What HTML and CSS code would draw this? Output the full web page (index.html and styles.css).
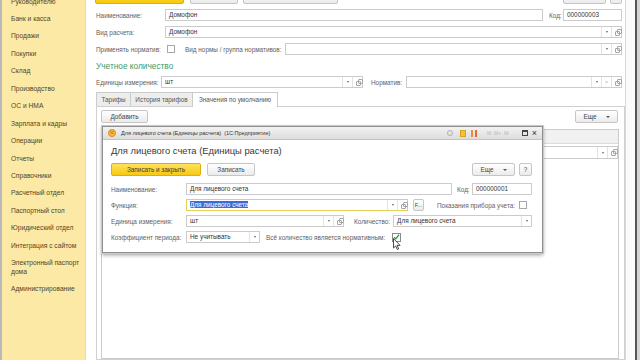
FILE: index.html
```html
<!DOCTYPE html>
<html lang="ru">
<head>
    <meta charset="UTF-8">
    <title>Домофон (Виды расчета)</title>
    <link rel="stylesheet" href="styles.css">
</head>
<body>
    <div class="screen">
        <!-- Sections panel -->
        <nav class="sections">
            <ul class="sections-list">
                <li>Руководителю</li>
                <li>Банк и касса</li>
                <li>Продажи</li>
                <li>Покупки</li>
                <li>Склад</li>
                <li>Производство</li>
                <li>ОС и НМА</li>
                <li>Зарплата и кадры</li>
                <li>Операции</li>
                <li>Отчеты</li>
                <li>Справочники</li>
                <li>Расчетный отдел</li>
                <li>Паспортный стол</li>
                <li>Юридический отдел</li>
                <li>Интеграция с сайтом</li>
                <li>Электронный паспорт дома</li>
                <li>Администрирование</li>
            </ul>
        </nav>

        <!-- Main form -->
        <main class="form-window">
            <div class="form-body">
                <div class="toolbar">
                    <span class="tb-btn tb-primary"></span>
                    <span class="tb-btn tb-write"></span>
                    <span class="tb-btn tb-wide"></span>
                    <span class="spacer"></span>
                    <span class="tb-btn tb-more"></span>
                    <span class="tb-btn tb-help"></span>
                </div>

                <div class="field-row">
                    <span class="field-label label-main">Наименование:</span>
                    <div class="input grow"><span class="input-value">Домофон</span></div>
                    <span class="field-label label-code">Код:</span>
                    <div class="input code-main"><span class="input-value">000000003</span></div>
                </div>

                <div class="field-row">
                    <span class="field-label label-main">Вид расчета:</span>
                    <div class="input grow">
                        <span class="input-value">Домофон</span>
                        <span class="input-btn btn-dd"></span>
                        <span class="input-btn btn-open"></span>
                    </div>
                </div>

                <div class="field-row">
                    <span class="field-label label-main">Применять норматив:</span>
                    <span class="checkbox check-norm"></span>
                    <span class="field-label label-norm-group">Вид нормы / группа нормативов:</span>
                    <div class="input grow">
                        <span class="input-value"></span>
                        <span class="input-btn btn-dd"></span>
                        <span class="input-btn btn-open"></span>
                    </div>
                </div>

                <h2 class="group-title">Учетное количество</h2>

                <div class="field-row row-units">
                    <span class="field-label label-units">Единицы измерения:</span>
                    <div class="input units-main">
                        <span class="input-value">шт</span>
                        <span class="input-btn btn-dd"></span>
                        <span class="input-btn btn-open"></span>
                    </div>
                    <span class="field-label label-normative">Норматив:</span>
                    <div class="input grow">
                        <span class="input-value"></span>
                        <span class="input-btn btn-dd"></span>
                        <span class="input-btn btn-clear">×</span>
                        <span class="input-btn btn-open"></span>
                    </div>
                </div>

                <div class="tabs">
                    <span class="tab tab-tariffs">Тарифы</span>
                    <span class="tab tab-history">История тарифов</span>
                    <span class="tab tab-defaults tab-active">Значения по умолчанию</span>
                </div>

                <div class="tab-panel">
                    <div class="panel-bar">
                        <span class="cmd cmd-add">Добавить</span>
                        <span class="spacer"></span>
                        <span class="cmd cmd-more">Еще <i class="caret"></i></span>
                    </div>
                    <div class="grid">
                        <div class="grid-head"></div>
                        <div class="grid-row">
                            <div class="input grid-edit">
                                <span class="input-value"></span>
                                <span class="input-btn btn-dd"></span>
                                <span class="input-btn btn-open"></span>
                            </div>
                        </div>
                    </div>
                </div>
            </div>
            <div class="scroll-strip"></div>
        </main>

        <div class="frame-edge"></div>

        <!-- Dialog: unit of calculation -->
        <section class="dialog">
            <header class="dialog-titlebar">
                <span class="logo-1c">1С</span>
                <span class="dialog-caption">Для лицевого счета (Единицы расчета)&nbsp; (1С:Предприятие)</span>
                <span class="spacer"></span>
                <span class="tool tool-link"></span>
                <span class="tool tool-doc"></span>
                <span class="tool tool-chart"></span>
                <span class="tool-mem">M&nbsp; M+&nbsp; M-</span>
                <span class="tool tool-max"></span>
                <span class="tool-close">×</span>
            </header>

            <div class="dialog-body">
                <h1 class="dialog-heading">Для лицевого счета (Единицы расчета)</h1>

                <div class="command-bar">
                    <span class="cmd cmd-primary">Записать и закрыть</span>
                    <span class="cmd cmd-write">Записать</span>
                    <span class="spacer"></span>
                    <span class="cmd cmd-more">Еще <i class="caret"></i></span>
                    <span class="cmd cmd-help">?</span>
                </div>

                <div class="field-row dlg-row">
                    <span class="field-label label-dlg">Наименование:</span>
                    <div class="input grow"><span class="input-value">Для лицевого счета</span></div>
                    <span class="field-label label-dlg-code">Код:</span>
                    <div class="input code-dlg"><span class="input-value">000000001</span></div>
                </div>

                <div class="field-row dlg-row">
                    <span class="field-label label-dlg">Функция:</span>
                    <div class="input input-focused func-dlg">
                        <span class="input-value"><span class="selection">Для лицевого счета</span></span>
                        <span class="input-btn btn-dd"></span>
                        <span class="input-btn btn-open"></span>
                    </div>
                    <span class="cmd cmd-formula">F...</span>
                    <span class="field-label label-meter">Показания прибора учета:</span>
                    <span class="checkbox"></span>
                </div>

                <div class="field-row dlg-row">
                    <span class="field-label label-dlg">Единица измерения:</span>
                    <div class="input unit-dlg">
                        <span class="input-value">шт</span>
                        <span class="input-btn btn-dd"></span>
                        <span class="input-btn btn-open"></span>
                    </div>
                    <span class="field-label label-qty">Количество:</span>
                    <div class="input grow">
                        <span class="input-value">Для лицевого счета</span>
                        <span class="input-btn btn-dd"></span>
                    </div>
                </div>

                <div class="field-row dlg-row">
                    <span class="field-label label-dlg">Коэффициент периода:</span>
                    <div class="input period-dlg">
                        <span class="input-value">Не учитывать</span>
                        <span class="input-btn btn-dd"></span>
                    </div>
                    <span class="field-label label-all">Всё количество является нормативным:</span>
                    <span class="checkbox checkbox-checked">
                        <svg width="8" height="8" viewBox="0 0 8 8"><path d="M1.2 4.2l2 2L6.9 1.3" fill="none" stroke="#2f8a3c" stroke-width="1.4"/></svg>
                    </span>
                </div>
            </div>
        </section>

        <!-- Mouse pointer -->
        <svg class="pointer" width="8" height="12" viewBox="0 0 8 12">
            <path d="M0.5 0.5v9.5l2.2-2.1 1.6 3.6 1.4-0.6-1.6-3.5h3z" fill="#fff" stroke="#222" stroke-width="0.8"/>
        </svg>
    </div>
</body>
</html>
```

FILE: styles.css
```css
* {
    margin: 0;
    padding: 0;
    box-sizing: border-box;
}

html, body {
    width: 640px;
    height: 360px;
    overflow: hidden;
}

body {
    font-family: "Liberation Sans", Arial, sans-serif;
    font-size: 6.4px;
    color: #444;
    background: #fff;
}

.screen {
    position: relative;
    display: flex;
    width: 640px;
    height: 360px;
}

.spacer {
    flex: 1;
}

/* Sections panel */
.sections {
    width: 85px;
    flex-shrink: 0;
    background: #fbe9a5;
    border-left: 2px solid #b9b9b9;
    overflow: hidden;
}

.sections-list {
    list-style: none;
    margin-top: -7px;
    padding: 0 4px 0 9px;
}

.sections-list li {
    padding: 4.5px 0;
    line-height: 8.45px;
    font-size: 6.7px;
    color: #55441f;
}

/* Main form */
.form-window {
    flex: 1;
    display: flex;
    border-left: 1px solid #e6dcb4;
    background: #fff;
}

.form-body {
    flex: 1;
    display: flex;
    flex-direction: column;
    padding-left: 10px;
}

.scroll-strip {
    width: 10px;
    flex-shrink: 0;
    border-left: 1px solid #d9d9d9;
    background: #fbfbfb;
}

.frame-edge {
    width: 5px;
    flex-shrink: 0;
    border-left: 2px solid #555;
    background: #d4d4d4;
}

.toolbar {
    display: flex;
    height: 14px;
    margin: -10px 3px 0 -1px;
}

.tb-btn {
    height: 14px;
    border: 1px solid #c4c4c4;
    border-radius: 2px;
    background: linear-gradient(#fff, #ececec);
}

.tb-primary {
    width: 89px;
    border-color: #e0b000;
    background: linear-gradient(#ffe25a, #f8c90a);
}

.tb-write {
    width: 48px;
    margin-left: 6px;
}

.tb-wide {
    width: 95px;
    margin-left: 5px;
}

.tb-more {
    width: 43px;
}

.tb-help {
    width: 12px;
    margin-left: 4px;
}

/* Fields */
.field-row {
    display: flex;
    align-items: center;
    height: 12px;
    margin: 5px 3px 0 0;
}

.field-label {
    flex-shrink: 0;
    color: #5f5f5f;
    white-space: nowrap;
}

.label-main {
    width: 69px;
}

.label-code {
    width: 14px;
    margin-left: 6px;
}

.label-norm-group {
    width: 100px;
    margin-left: 10px;
}

.label-units {
    width: 65px;
}

.label-normative {
    width: 35px;
    margin-left: 8px;
}

.input {
    display: flex;
    align-items: center;
    height: 12px;
    border: 1px solid #cbcbcb;
    background: #fff;
    flex-shrink: 0;
}

.input.grow {
    flex: 1;
}

.input-value {
    flex: 1;
    padding-left: 3px;
    color: #333;
    white-space: nowrap;
    overflow: hidden;
    line-height: 10px;
}

.input-btn {
    position: relative;
    width: 10px;
    height: 100%;
    border-left: 1px solid #e3e3e3;
    display: flex;
    align-items: center;
    justify-content: center;
    flex-shrink: 0;
}

.btn-dd::before {
    content: "";
    border-left: 1.5px solid transparent;
    border-right: 1.5px solid transparent;
    border-top: 2px solid #666;
}

.btn-open::before,
.btn-open::after {
    content: "";
    position: absolute;
    width: 3px;
    height: 3px;
    border: 1px solid #a5a5a5;
    border-radius: 1px;
}

.btn-open::before {
    left: 2.5px;
    top: 4px;
}

.btn-open::after {
    left: 4.5px;
    top: 2px;
}

.btn-clear {
    color: #c2c2c2;
    font-size: 6px;
}

.code-main {
    width: 59px;
}

.units-main {
    width: 202px;
}

.checkbox {
    width: 8px;
    height: 8px;
    border: 1px solid #a8a8a8;
    background: #fff;
    flex-shrink: 0;
    display: flex;
    align-items: center;
    justify-content: center;
}

.check-norm {
    margin-left: 2px;
}

.group-title {
    margin-top: 5px;
    font-size: 8.3px;
    font-weight: normal;
    line-height: 12px;
    color: #3b986b;
}

.row-units {
    margin-top: 4px;
}

/* Tabs */
.tabs {
    display: flex;
    height: 14px;
    margin-top: 4px;
}

.tab {
    height: 14px;
    border: 1px solid #cbcbcb;
    border-bottom: none;
    margin-right: -1px;
    background: #ededed;
    color: #555;
    line-height: 13px;
    text-align: center;
}

.tab-tariffs {
    width: 35px;
}

.tab-history {
    width: 63px;
}

.tab-defaults {
    width: 86px;
}

.tab-active {
    position: relative;
    z-index: 1;
    height: 15px;
    margin-bottom: -1px;
    background: #fff;
}

.tab-panel {
    flex: 1;
    display: flex;
    flex-direction: column;
    border: 1px solid #d0d0d0;
    padding: 3px 5px 0 4px;
}

.panel-bar {
    display: flex;
    height: 13px;
}

.cmd {
    display: flex;
    align-items: center;
    justify-content: center;
    height: 13px;
    border: 1px solid #c6c6c6;
    border-radius: 2px;
    background: linear-gradient(#fff, #ebebeb);
    color: #444;
    white-space: nowrap;
    flex-shrink: 0;
}

.cmd-add {
    width: 47px;
}

.cmd-more {
    width: 43px;
    margin-right: 1px;
    gap: 9px;
}

.caret {
    border-left: 2px solid transparent;
    border-right: 2px solid transparent;
    border-top: 2px solid #555;
}

.grid {
    flex: 1;
    margin-top: 6px;
    border: 1px solid #cbcbcb;
}

.grid-head {
    height: 14px;
    border-bottom: 1px solid #dcdcdc;
    background: #f1f1f1;
}

.grid-row {
    display: flex;
    justify-content: flex-end;
    padding-top: 2px;
}

.grid-edit {
    width: 200px;
    height: 13px;
}

/* Dialog */
.dialog {
    position: absolute;
    left: 102px;
    top: 126px;
    width: 441px;
    height: 127px;
    border: 1px solid #909090;
    background: #fff;
    box-shadow: 0 0 0 1px #c8c8c8, 0 2px 4px rgba(0, 0, 0, 0.4);
}

.dialog-titlebar {
    display: flex;
    align-items: center;
    height: 13px;
    padding: 0 5px;
    background: linear-gradient(#f3f3f3, #dcdcdc);
    border-bottom: 1px solid #c4c4c4;
}

.logo-1c {
    width: 8px;
    height: 8px;
    border-radius: 50%;
    background: #f6c53c;
    border: 1px solid #d9872a;
    color: #c0392b;
    font-size: 3px;
    font-weight: bold;
    line-height: 6px;
    text-align: center;
}

.dialog-caption {
    margin-left: 5px;
    font-size: 5.5px;
    color: #333;
    white-space: nowrap;
}

.tool {
    width: 6px;
    height: 7px;
    margin-left: 5px;
}

.tool-link {
    width: 6px;
    height: 6px;
    border-radius: 50%;
    border: 1px solid #b0b0b0;
}

.tool-doc {
    margin-left: 7px;
    background: #f2c43b;
    border: 1px solid #d9a31c;
}

.tool-chart {
    background: linear-gradient(90deg, #f08a3c 0 2px, transparent 2px 4px, #e9663a 4px);
}

.tool-mem {
    margin-left: 10px;
    font-size: 5px;
    color: #b9b9b9;
    white-space: nowrap;
}

.tool-max {
    margin-left: 12px;
    width: 6px;
    height: 6px;
    border: 1px solid #444;
    border-top-width: 2px;
}

.tool-close {
    margin-left: 4px;
    font-size: 9px;
    line-height: 8px;
    color: #333;
}

.dialog-body {
    padding: 0 10px 0 8px;
}

.dialog-heading {
    margin-top: 5px;
    font-size: 9.4px;
    font-weight: normal;
    line-height: 12px;
    color: #3a3a3a;
}

.command-bar {
    display: flex;
    margin-top: 6px;
    height: 13px;
}

.cmd-primary {
    width: 90px;
    border-color: #dcae12;
    background: linear-gradient(#ffe25c, #f7c811);
    color: #3a3a3a;
}

.cmd-write {
    width: 48px;
    margin-left: 6px;
}

.command-bar .cmd-more {
    margin-right: 4px;
}

.cmd-help {
    width: 13px;
}

.dlg-row {
    margin: 4px 0 0 0;
}

.command-bar + .dlg-row {
    margin-top: 7px;
}

.label-dlg {
    width: 75px;
}

.label-dlg-code {
    width: 15px;
    margin-left: 5px;
}

.code-dlg {
    width: 60px;
}

.func-dlg {
    width: 222px;
}

.input-focused {
    border-color: #e3cf5a;
}

.selection {
    background: #3b6bd6;
    color: #fff;
}

.cmd-formula {
    width: 11px;
    height: 12px;
    margin-left: 5px;
    font-size: 5.5px;
}

.label-meter {
    margin-left: 13px;
    width: 82px;
}

.unit-dlg {
    width: 158px;
}

.label-qty {
    margin: 0 3px 0 10px;
}

.period-dlg {
    width: 74px;
}

.label-all {
    width: 126px;
    margin-left: 6px;
}

.checkbox-checked {
    width: 9px;
    height: 9px;
    border-color: #8a8a8a;
}

.pointer {
    position: absolute;
    left: 393px;
    top: 238px;
}
```
